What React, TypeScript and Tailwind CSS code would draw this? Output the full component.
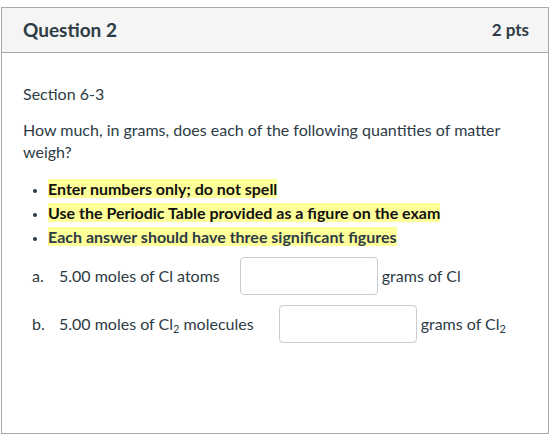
export default function App() {
  return (
    <div className="w-[555px] h-[436px] bg-white pt-[7px] pl-[1px] font-['Lato',sans-serif] text-[#2d3b45]">
      <div className="w-[548px] h-[427px] border border-[#aaaaaa] flex flex-col">
        <div className="h-[45px] bg-[#f5f5f5] border-b border-[#aaaaaa] flex items-center justify-between pl-[21px] pr-[19px]">
          <h2 className="text-[19px] font-bold">Question 2</h2>
          <span className="text-[17px] font-bold">2 pts</span>
        </div>
        <div className="pl-[21px] pr-[20px] pt-[30px] text-[16px] leading-[22px]">
          <p>Section 6-3</p>
          <p className="mt-[14px]">How much, in grams, does each of the following quantities of matter weigh?</p>
          <ul className="mt-[14px] list-disc pl-[25px] font-bold leading-[24px] text-[#111] marker:text-[#2d3b45] marker:text-[13px]">
            <li><span className="bg-[#ffff99]">Enter numbers only; do not spell</span></li>
            <li><span className="bg-[#ffff99]">Use the Periodic Table provided as a figure on the exam</span></li>
            <li><span className="bg-[#ffff99] text-[#2d3b45]">Each answer should have three significant figures</span></li>
          </ul>
          <div className="mt-[8px] flex flex-col gap-[10px] pl-[9px]">
            <div className="flex items-center">
              <span className="w-[27px]">a.</span>
              <span>5.00 moles of Cl atoms</span>
              <input className="ml-[20px] w-[138px] h-[38px] border border-[#c7cdd1] rounded-[4px] bg-white" />
              <span className="ml-[4px]">grams of Cl</span>
            </div>
            <div className="flex items-center">
              <span className="w-[27px]">b.</span>
              <span>5.00 moles of Cl<sub className="text-[11px]">2</sub> molecules</span>
              <input className="ml-[25px] w-[138px] h-[38px] border border-[#c7cdd1] rounded-[4px] bg-white" />
              <span className="ml-[4px]">grams of Cl<sub className="text-[11px]">2</sub></span>
            </div>
          </div>
        </div>
      </div>
    </div>
  );
}
